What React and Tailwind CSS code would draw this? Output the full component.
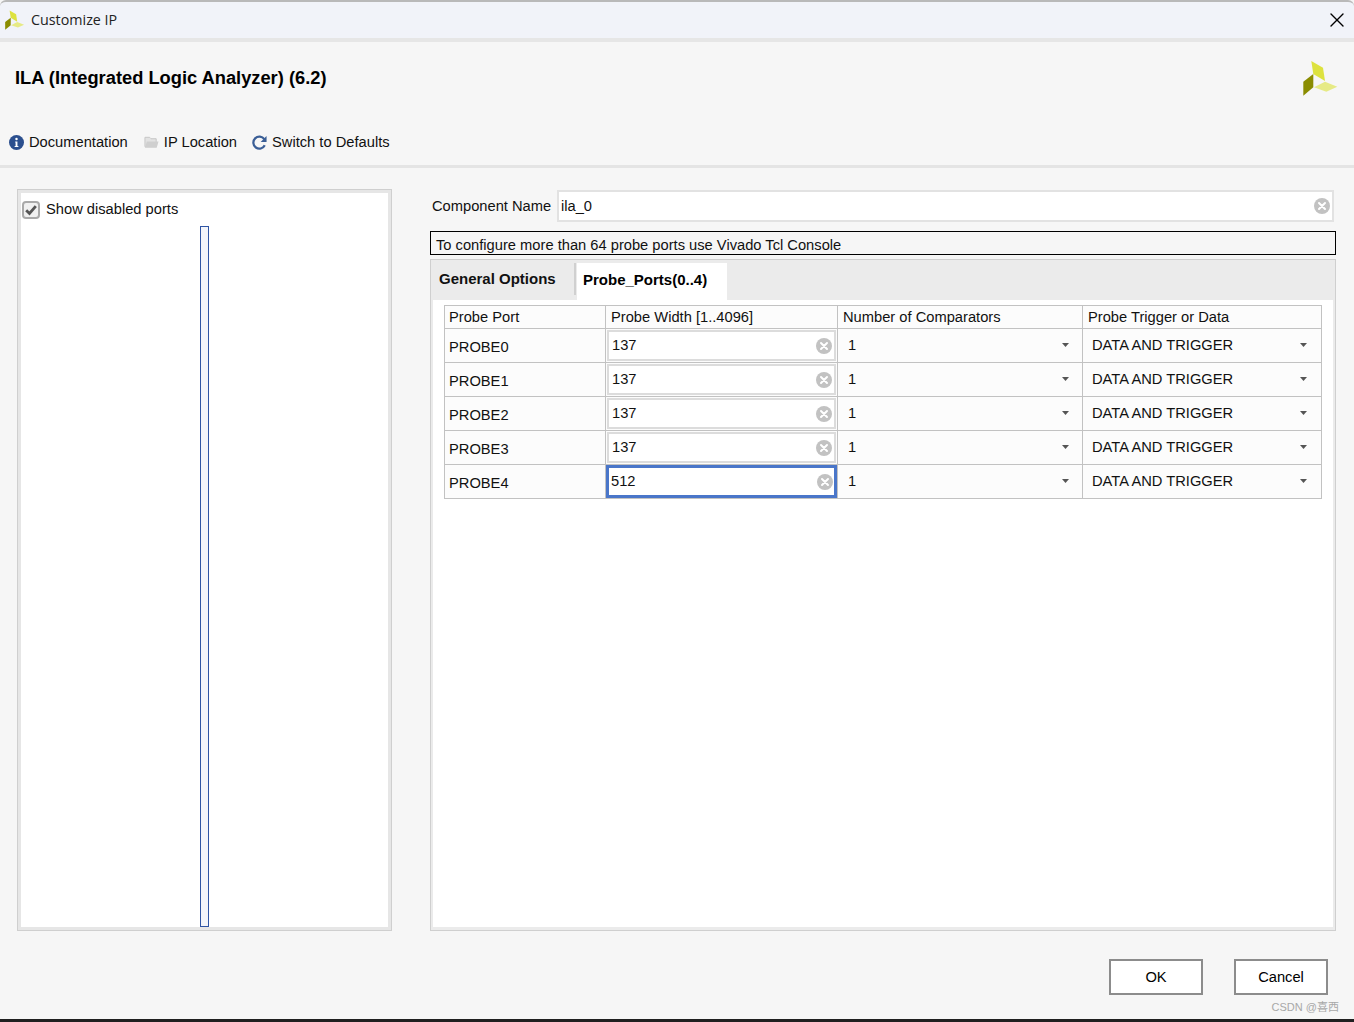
import React from 'react';
import { X } from 'lucide-react';

const probes = [
    { name: 'PROBE0', width: '137' },
    { name: 'PROBE1', width: '137' },
    { name: 'PROBE2', width: '137' },
    { name: 'PROBE3', width: '137' },
    { name: 'PROBE4', width: '512', focused: true },
];

const Logo = ({ className }) => (
    <svg viewBox="0 0 36 36" className={className}>
        <path d="M8.3 1 20 7.7 22 21 10.3 14Z" fill="#dde23f" />
        <path d="M22 21.7 34.3 26.7 23.3 31.7 11 27.3Z" fill="#e6ea85" />
        <path d="M10.3 14V27.3L.3 35.7V21.7Z" fill="#8a8c00" />
    </svg>
);

const ClearIcon = () => (
    <svg viewBox="0 0 16 16" className="w-4 h-4 shrink-0">
        <circle cx="8" cy="8" r="8" fill="#c2c2c2" />
        <path d="M5 5 11 11M11 5 5 11" stroke="#fff" strokeWidth="2" strokeLinecap="round" />
    </svg>
);

const Arrow = () => (
    <svg viewBox="0 0 7 4" className="w-[7px] h-1 shrink-0">
        <path d="M0 0H7L3.5 4Z" fill="#555" />
    </svg>
);

const Dropdown = ({ value, className }) => (
    <div className={`flex items-center justify-between h-[33px] pb-[1px] ${className}`}>
        <span>{value}</span>
        <Arrow />
    </div>
);

const App = () => {
    return (
        <div className="w-[1354px] h-[1022px] flex flex-col bg-[#f6f6f6] text-[14.7px] text-[#111] overflow-hidden font-['Liberation_Sans',Arial,sans-serif]">
            {/* Title bar */}
            <div className="h-[38px] shrink-0 flex items-center justify-between bg-[#f1f3f9] border-t-2 border-[#b9b9b9] rounded-t-[6px] pl-[5px] pr-[5px] pb-[1px]">
                <div className="flex items-center gap-[6px]">
                    <Logo className="w-5 h-5" />
                    <span className="font-['Open_Sans',sans-serif] text-[14.3px] text-[#222]">Customize IP</span>
                </div>
                <X size={24} strokeWidth={1.4} className="text-black" />
            </div>
            <div className="h-1 shrink-0 bg-[#e6e6e6]" />

            {/* Header */}
            <div className="h-[126px] shrink-0 flex flex-col border-b-[3px] border-[#e4e4e4]">
                <div className="flex justify-between h-[88px] shrink-0 pl-[15px] pr-[15px]">
                    <h1 className="text-[18.3px] font-bold text-black mt-[24px] leading-6">ILA (Integrated Logic Analyzer) (6.2)</h1>
                    <Logo className="w-9 h-9 mt-[18px]" />
                </div>
                <div className="flex items-center pl-[9px] h-6">
                    <svg viewBox="0 0 16 16" className="w-[15px] h-[15px] mr-[5px]">
                        <circle cx="8" cy="8" r="8" fill="#2b4f8e" />
                        <circle cx="8" cy="4.3" r="1.3" fill="#fff" />
                        <path d="M6.6 6.8H9V11.6H10V12.8H6V11.6H7V8H6.6Z" fill="#fff" />
                    </svg>
                    <span className="mr-[16px]">Documentation</span>
                    <svg viewBox="0 0 16 14" className="w-[15px] h-[14px] mr-[5px]">
                        <path d="M1 2H6L7.5 3.5H13V12H1Z" fill="#e2e2e2" stroke="#c4c4c4" />
                        <path d="M3 6.5H15.5L13.5 13H1Z" fill="#cfcfcf" />
                    </svg>
                    <span className="mr-[15px]">IP Location</span>
                    <svg viewBox="0 0 16 16" className="w-[15px] h-[15px] mr-[5px]" fill="none">
                        <path d="M13.6 11a6.4 6.4 0 1 1-.5-6.5" stroke="#3a5e96" strokeWidth="2.4" />
                        <path d="M15.5 1V7.4H9.2Z" fill="#3a5e96" />
                    </svg>
                    <span>Switch to Defaults</span>
                </div>
            </div>

            {/* Main */}
            <div className="h-[763px] shrink-0 flex gap-[38px] pt-[21px] pl-[17px] pr-[18px]">
                {/* Left panel */}
                <div className="w-[375px] shrink-0 flex flex-col bg-white border border-[#cfcfcf]">
                    <div className="flex-1 flex flex-col border-[3px] border-[#e6e6e6]">
                        <div className="flex items-center h-[33px] pl-[1px] shrink-0 gap-[6px]">
                            <div className="w-[18px] h-[18px] rounded-[4px] border-2 border-[#a9a9a9] bg-[#f0f0f0] flex items-center justify-center">
                                <svg viewBox="0 0 12 12" className="w-3 h-3" fill="none">
                                    <path d="M1.2 6.2 4.5 9.5 10.8 2.2" stroke="#555" strokeWidth="2.8" />
                                </svg>
                            </div>
                            <span>Show disabled ports</span>
                        </div>
                        <div className="w-[9px] flex-1 ml-[179px] border border-[#2f55a4] bg-[#f3f5fa]" />
                    </div>
                </div>

                {/* Right panel */}
                <div className="flex-1 flex flex-col">
                    <div className="flex items-center h-[32px] shrink-0 mt-[1px] px-[2px] gap-[6px]">
                        <span className="w-[119px] shrink-0 whitespace-nowrap">Component Name</span>
                        <div className="flex-1 h-full flex items-center justify-between bg-white border-2 border-[#e2e2e2] pl-[2px] pr-[2px]">
                            <span>ila_0</span>
                            <ClearIcon />
                        </div>
                    </div>
                    <div className="h-[24px] shrink-0 mt-[9px] border border-black pl-[5px] leading-[27px]">
                        To configure more than 64 probe ports use Vivado Tcl Console
                    </div>
                    <div className="flex-1 mt-[4px] flex flex-col border border-[#cfcfcf] bg-[#ebebeb]">
                        <div className="flex h-[40px] shrink-0 items-end pl-[3px]">
                            <div className="w-[142px] h-[32px] pl-[5px] self-start mt-[3px] flex items-center text-[15px] font-bold text-[#111] border-r-2 border-[#d0d0d0]">
                                General Options
                            </div>
                            <div className="ml-[1px] w-[150px] h-[37px] pl-[6px] pb-[3px] bg-white flex items-center text-[15px] font-bold text-black">
                                Probe_Ports(0..4)
                            </div>
                        </div>
                        <div className="flex-1 mx-[2px] mb-[3px] pl-[11px] pt-[5px] bg-white">
                            <div className="w-[878px] border border-[#c2c2c2] bg-[#fcfcfc]">
                                <div className="grid grid-cols-[160px_232px_245px_239px] h-[22px] items-center">
                                    <div className="pl-[4px] h-full leading-[23px]">Probe Port</div>
                                    <div className="pl-[5px] h-full leading-[23px] border-l border-[#c2c2c2]">Probe Width [1..4096]</div>
                                    <div className="pl-[5px] h-full leading-[23px] border-l border-[#c2c2c2]">Number of Comparators</div>
                                    <div className="pl-[5px] h-full leading-[23px] border-l border-[#c2c2c2]">Probe Trigger or Data</div>
                                </div>
                                {probes.map((probe) => (
                                    <div key={probe.name} className="grid grid-cols-[160px_232px_245px_239px] h-[34px] border-t border-[#c2c2c2]">
                                        <div className="h-[33px] pl-[4px] pt-[4px] flex items-center">{probe.name}</div>
                                        <div className="h-[33px] border-l border-[#c2c2c2]">
                                            {probe.focused ? (
                                                <div className="h-full flex items-center justify-between bg-white border-[3px] border-[#4a76c9] pl-[2px] pr-[1px]">
                                                    <span>{probe.width}</span>
                                                    <ClearIcon />
                                                </div>
                                            ) : (
                                                <div className="h-[31px] mx-[1px] mt-[1px] flex items-center justify-between bg-white border-2 border-[#dcdcdc] pl-[3px] pr-[2px]">
                                                    <span>{probe.width}</span>
                                                    <ClearIcon />
                                                </div>
                                            )}
                                        </div>
                                        <div className="h-[33px] border-l border-[#c2c2c2]">
                                            <Dropdown value="1" className="pl-[10px] pr-[13px]" />
                                        </div>
                                        <div className="h-[33px] border-l border-[#c2c2c2]">
                                            <Dropdown value="DATA AND TRIGGER" className="pl-[9px] pr-[14px]" />
                                        </div>
                                    </div>
                                ))}
                            </div>
                        </div>
                    </div>
                </div>
            </div>

            {/* Footer */}
            <div className="flex-1 flex flex-col items-end pt-[28px] pr-[26px]">
                <div className="flex gap-[31px]">
                    <button className="w-[94px] h-[36px] bg-white border-2 border-[#8c8c8c] text-black">OK</button>
                    <button className="w-[94px] h-[36px] bg-white border-2 border-[#8c8c8c] text-black">Cancel</button>
                </div>
                <div className="mt-[5px] -mr-[11px] text-[11px] leading-[14px] text-[#a8a8a8] font-['Liberation_Sans','Noto_Sans_CJK_SC',sans-serif]">CSDN @喜西</div>
            </div>
            <div className="h-[3px] shrink-0 bg-[#1f1f1f]" />
        </div>
    );
};

export default App;
